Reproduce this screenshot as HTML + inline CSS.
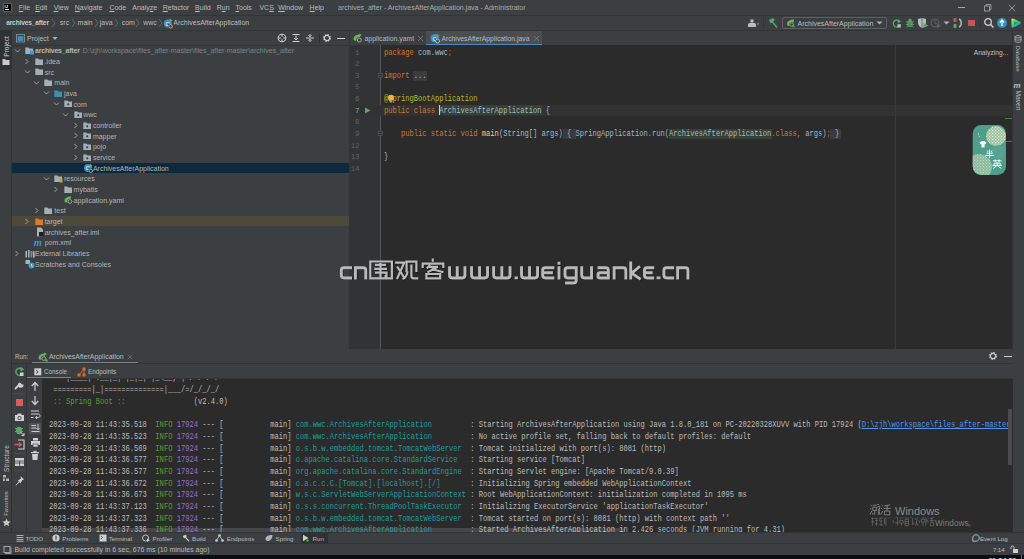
<!DOCTYPE html>
<html><head><meta charset="utf-8">
<style>
*{margin:0;padding:0;box-sizing:border-box}
html,body{width:1024px;height:559px;overflow:hidden;background:#3c3f41;font-family:"Liberation Sans",sans-serif;color:#bbbbbb;position:relative}
.a{position:absolute;display:block}
.t{position:absolute;white-space:pre;color:#bbbbbb}
.m{font-family:"Liberation Mono",monospace}
</style></head><body>
<div class="a" style="left:0px;top:15px;width:1024px;height:1px;background:#323435;"></div>
<div class="a" style="left:3px;top:3px;width:9px;height:9px;background:#1d6fb8;border-radius:1px"></div>
<div class="a" style="left:4px;top:4px;width:7px;height:7px;background:#000000;"></div>
<div class="t" style="left:4.6px;top:3.6px;font-size:4px;line-height:5px;color:#fff;font-weight:bold">IJ</div>
<div class="a" style="left:5px;top:9px;width:4px;height:1px;background:#ffffff;"></div>
<div class="t" style="left:18.80px;top:3.40px;font-size:7px;line-height:10px;color:#bbbbbb;"><u style="text-decoration-thickness:0.6px;text-underline-offset:1px">F</u>ile</div>
<div class="t" style="left:35.20px;top:3.40px;font-size:7px;line-height:10px;color:#bbbbbb;"><u style="text-decoration-thickness:0.6px;text-underline-offset:1px">E</u>dit</div>
<div class="t" style="left:53.70px;top:3.40px;font-size:7px;line-height:10px;color:#bbbbbb;"><u style="text-decoration-thickness:0.6px;text-underline-offset:1px">V</u>iew</div>
<div class="t" style="left:74.80px;top:3.40px;font-size:7px;line-height:10px;color:#bbbbbb;"><u style="text-decoration-thickness:0.6px;text-underline-offset:1px">N</u>avigate</div>
<div class="t" style="left:109.40px;top:3.40px;font-size:7px;line-height:10px;color:#bbbbbb;"><u style="text-decoration-thickness:0.6px;text-underline-offset:1px">C</u>ode</div>
<div class="t" style="left:132.30px;top:3.40px;font-size:7px;line-height:10px;color:#bbbbbb;">Analy<u style="text-decoration-thickness:0.6px;text-underline-offset:1px">z</u>e</div>
<div class="t" style="left:162.70px;top:3.40px;font-size:7px;line-height:10px;color:#bbbbbb;"><u style="text-decoration-thickness:0.6px;text-underline-offset:1px">R</u>efactor</div>
<div class="t" style="left:195.10px;top:3.40px;font-size:7px;line-height:10px;color:#bbbbbb;"><u style="text-decoration-thickness:0.6px;text-underline-offset:1px">B</u>uild</div>
<div class="t" style="left:216.70px;top:3.40px;font-size:7px;line-height:10px;color:#bbbbbb;">R<u style="text-decoration-thickness:0.6px;text-underline-offset:1px">u</u>n</div>
<div class="t" style="left:235.50px;top:3.40px;font-size:7px;line-height:10px;color:#bbbbbb;"><u style="text-decoration-thickness:0.6px;text-underline-offset:1px">T</u>ools</div>
<div class="t" style="left:259.40px;top:3.40px;font-size:7px;line-height:10px;color:#bbbbbb;">VC<u style="text-decoration-thickness:0.6px;text-underline-offset:1px">S</u></div>
<div class="t" style="left:278.20px;top:3.40px;font-size:7px;line-height:10px;color:#bbbbbb;"><u style="text-decoration-thickness:0.6px;text-underline-offset:1px">W</u>indow</div>
<div class="t" style="left:309.60px;top:3.40px;font-size:7px;line-height:10px;color:#bbbbbb;"><u style="text-decoration-thickness:0.6px;text-underline-offset:1px">H</u>elp</div>
<div class="t" style="left:338.00px;top:2.90px;font-size:7px;line-height:10px;color:#a9abad;">archives_after - ArchivesAfterApplication.java - Administrator</div>
<div class="a" style="left:958px;top:7px;width:7px;height:0.8px;background:#a8a8a8;"></div>
<svg class="a" style="left:984px;top:3.5px;" width="8" height="8" viewBox="0 0 8 8"><rect x="0.5" y="2" width="5" height="5" fill="none" stroke="#a8a8a8" stroke-width="0.8"/><path d="M2 2V0.5H7V5.5H5.5" fill="none" stroke="#a8a8a8" stroke-width="0.8"/></svg>
<svg class="a" style="left:1008px;top:4px;" width="8" height="8" viewBox="0 0 8 8"><path d="M0.8 0.8L7.2 7.2M7.2 0.8L0.8 7.2" stroke="#a8a8a8" stroke-width="0.8"/></svg>
<div class="a" style="left:0px;top:30px;width:1024px;height:1px;background:#323435;"></div>
<div class="t" style="left:6.20px;top:18.40px;font-size:6.6px;line-height:10px;color:#c8c8c8;font-weight:bold;letter-spacing:-0.15px">archives_after</div>
<div class="t" style="left:59.80px;top:18.40px;font-size:7px;line-height:10px;color:#bbbbbb;">src</div>
<div class="t" style="left:77.60px;top:18.40px;font-size:7px;line-height:10px;color:#bbbbbb;">main</div>
<div class="t" style="left:99.80px;top:18.40px;font-size:7px;line-height:10px;color:#bbbbbb;">java</div>
<div class="t" style="left:121.70px;top:18.40px;font-size:7px;line-height:10px;color:#bbbbbb;">com</div>
<div class="t" style="left:143.20px;top:18.40px;font-size:7px;line-height:10px;color:#bbbbbb;">wwc</div>
<div class="t" style="left:173.30px;top:18.40px;font-size:7px;line-height:10px;color:#bbbbbb;">ArchivesAfterApplication</div>
<svg class="a" style="left:51px;top:18px;" width="5" height="10" viewBox="0 0 5 10"><path d="M1 1L4 5L1 9" fill="none" stroke="#6e7072" stroke-width="0.8"/></svg>
<svg class="a" style="left:70.8px;top:18px;" width="5" height="10" viewBox="0 0 5 10"><path d="M1 1L4 5L1 9" fill="none" stroke="#6e7072" stroke-width="0.8"/></svg>
<svg class="a" style="left:93.7px;top:18px;" width="5" height="10" viewBox="0 0 5 10"><path d="M1 1L4 5L1 9" fill="none" stroke="#6e7072" stroke-width="0.8"/></svg>
<svg class="a" style="left:114px;top:18px;" width="5" height="10" viewBox="0 0 5 10"><path d="M1 1L4 5L1 9" fill="none" stroke="#6e7072" stroke-width="0.8"/></svg>
<svg class="a" style="left:135px;top:18px;" width="5" height="10" viewBox="0 0 5 10"><path d="M1 1L4 5L1 9" fill="none" stroke="#6e7072" stroke-width="0.8"/></svg>
<svg class="a" style="left:157.6px;top:18px;" width="5" height="10" viewBox="0 0 5 10"><path d="M1 1L4 5L1 9" fill="none" stroke="#6e7072" stroke-width="0.8"/></svg>
<svg class="a" style="left:163px;top:18px;" width="11" height="11" viewBox="0 0 11 11"><circle cx="4.8" cy="5.4" r="4" fill="#3d8fc6"/><text x="4.6" y="7.6" font-size="6" text-anchor="middle" fill="#fff" font-family="Liberation Sans">C</text><rect x="5" y="6" width="6" height="5" fill="#3c3f41"/><circle cx="7.5" cy="8.3" r="1.8" fill="none" stroke="#c8c8c8" stroke-width="0.8"/><path d="M6.5 0.3L9.5 2.5L6.5 4.7Z" fill="#59a869"/></svg>
<svg class="a" style="left:746px;top:18px;" width="14" height="10" viewBox="0 0 14 10"><path d="M2 9V6.5C2 5.5 3 5 4 5H8C9 5 10 5.5 10 6.5V9Z M4.5 4.5V1.5H7.5V4.5Z" fill="#bbbbbb"/><path d="M11 5.5L13 5.5L12 7Z" fill="#bbb"/></svg>
<div class="a" style="left:763px;top:17px;width:1px;height:12px;background:#323435;"></div>
<svg class="a" style="left:767px;top:17px;" width="12" height="12" viewBox="0 0 12 12"><path d="M2 3L6 1L8 3L6 4.5L10.5 10L9.5 11L5 5.5L3.5 6.5Z" fill="#59a869"/></svg>
<div class="a" style="left:782px;top:17px;width:105px;height:12px;border:1px solid #5e6060;border-radius:2px;background:#3c3f41"></div>
<svg class="a" style="left:786px;top:18px;" width="10" height="10" viewBox="0 0 10 10"><path d="M1 6C1 3 4 1.5 8 1.5C8 5 6 8 3 8C2 8 1 7 1 6Z" fill="#6db553"/><circle cx="5.5" cy="6.5" r="2.5" fill="#3c3f41"/><circle cx="5.5" cy="6.5" r="1.8" fill="none" stroke="#afb1b3" stroke-width="0.8"/><circle cx="7.5" cy="8.3" r="1.2" fill="#2fc424"/></svg>
<div class="t" style="left:797.50px;top:18.50px;font-size:7px;line-height:10px;color:#bbbbbb;">ArchivesAfterApplication</div>
<svg class="a" style="left:876px;top:20px;" width="7" height="6" viewBox="0 0 7 6"><path d="M0.5 1.5H6.5L3.5 4.5Z" fill="#afb1b3"/></svg>
<svg class="a" style="left:891px;top:17px;" width="12" height="12" viewBox="0 0 12 12"><path d="M8.8 4.8A3.5 3.5 0 1 0 9 8" fill="none" stroke="#59a869" stroke-width="1.3"/><path d="M6.8 2L10 4.6L6.8 6.4Z" fill="#59a869"/><rect x="6.5" y="7.2" width="3.3" height="3.3" fill="#bbbbbb"/></svg>
<svg class="a" style="left:904px;top:17px;" width="12" height="12" viewBox="0 0 12 12"><ellipse cx="6" cy="6.8" rx="2.6" ry="3.3" fill="#59a869"/><path d="M2 5H10M2 7.5H10M2.5 10L4 9M9.5 10L8 9" stroke="#59a869" stroke-width="0.9"/><circle cx="6" cy="3" r="1.6" fill="#59a869"/><path d="M4.5 6H7.5M4.5 8.3H7.5" stroke="#3c3f41" stroke-width="0.6"/></svg>
<svg class="a" style="left:917px;top:17px;" width="12" height="12" viewBox="0 0 12 12"><path d="M1 2L5 1L9 2V6C9 9 5 11 5 11C5 11 1 9 1 6Z" fill="#bbbbbb"/><path d="M5 1V11" stroke="#3c3f41" stroke-width="0.6"/><path d="M6.5 6L11.5 8.5L6.5 11Z" fill="#59a869"/></svg>
<svg class="a" style="left:930px;top:17px;" width="12" height="12" viewBox="0 0 12 12"><circle cx="5" cy="6" r="4" fill="none" stroke="#5d5f61" stroke-width="1"/><path d="M5 3V6L7 7" stroke="#5d5f61" stroke-width="0.9" fill="none"/><path d="M7 6.5L11 9L7 11.5Z" fill="#5d5f61"/></svg>
<svg class="a" style="left:943px;top:20px;" width="7" height="6" viewBox="0 0 7 6"><path d="M0.5 1.5H6.5L3.5 4.5Z" fill="#afb1b3"/></svg>
<svg class="a" style="left:952px;top:17px;" width="12" height="12" viewBox="0 0 12 12"><rect x="1.5" y="1" width="3" height="4" rx="1" fill="#c75450"/><rect x="1.5" y="7" width="3" height="4" rx="1" fill="#59a869"/><path d="M7 2C10 3 10 9 7 10" fill="none" stroke="#bbbbbb" stroke-width="1.4"/></svg>
<div class="a" style="left:968px;top:19.5px;width:6.5px;height:6.5px;background:#c75450;"></div>
<div class="a" style="left:980px;top:17px;width:1px;height:12px;background:#323435;"></div>
<svg class="a" style="left:983px;top:17px;" width="12" height="12" viewBox="0 0 12 12"><circle cx="5" cy="5" r="3.3" fill="none" stroke="#cfcfcf" stroke-width="1.3"/><path d="M7.5 7.5L10.5 10.5" stroke="#cfcfcf" stroke-width="1.5"/></svg>
<svg class="a" style="left:996px;top:17px;" width="12" height="12" viewBox="0 0 12 12"><circle cx="6" cy="6" r="5" fill="#3592c4"/><path d="M6 9V3.5M3.8 5.5L6 3L8.2 5.5" fill="none" stroke="#fff" stroke-width="1.2"/></svg>
<svg class="a" style="left:1010px;top:17px;" width="12" height="12" viewBox="0 0 12 12"><defs><linearGradient id="tbx" x1="0" y1="0" x2="1" y2="1"><stop offset="0" stop-color="#f0e53a"/><stop offset="0.45" stop-color="#2fd08a"/><stop offset="1" stop-color="#1f7ae0"/></linearGradient></defs><path d="M1.5 2.5Q1.5 1 3 1.5L10.5 5Q11.5 6 10.5 7L3 10.5Q1.5 11 1.5 9.5Z" fill="url(#tbx)"/><path d="M4 4V8L7.5 6Z" fill="#1c1c1c" opacity="0.35"/></svg>
<div class="a" style="left:0px;top:31px;width:11px;height:512px;background:#3c3f41;"></div>
<div class="a" style="left:0px;top:31px;width:11px;height:39px;background:#2f3133;"></div>
<div class="a" style="left:11px;top:31px;width:1px;height:501px;background:#2f3132;"></div>
<div class="t" style="left:-9px;top:42px;width:30px;height:9px;font-size:6.6px;line-height:9px;transform:rotate(-90deg);text-align:center;color:#d0d0d0">Project</div>
<svg class="a" style="left:2px;top:58px;" width="8" height="8" viewBox="0 0 8 8"><path d="M0.5 1H3L4 2H7.5V7H0.5Z" fill="#c9c9c9"/></svg>
<div class="t" style="left:-13px;top:453.5px;width:38px;height:9px;font-size:6.6px;line-height:9px;transform:rotate(-90deg);text-align:center;color:#bbbbbb">Structure</div>
<svg class="a" style="left:2px;top:474px;" width="8" height="8" viewBox="0 0 8 8"><rect x="1" y="1" width="3" height="2.5" fill="#afb1b3"/><rect x="4" y="4.5" width="3" height="2.5" fill="#afb1b3"/><rect x="1" y="4.5" width="2" height="2.5" fill="#afb1b3"/></svg>
<div class="t" style="left:-13px;top:498.5px;width:38px;height:9px;font-size:6px;line-height:9px;transform:rotate(-90deg);text-align:center;color:#bbbbbb">Favorites</div>
<svg class="a" style="left:1.5px;top:518px;" width="9" height="9" viewBox="0 0 9 9"><path d="M4.5 0.5L5.7 3.3L8.6 3.5L6.4 5.4L7.1 8.3L4.5 6.8L1.9 8.3L2.6 5.4L0.4 3.5L3.3 3.3Z" fill="#c9c9c9"/></svg>
<div class="a" style="left:12px;top:45px;width:337px;height:1px;background:#323435;"></div>
<svg class="a" style="left:16px;top:34px;" width="9" height="9" viewBox="0 0 9 9"><rect x="0.5" y="0.5" width="8" height="7.5" fill="none" stroke="#8b8d8f" stroke-width="0.9"/><rect x="1.6" y="2.2" width="5.8" height="4.7" fill="#3592c4"/></svg>
<div class="t" style="left:27.00px;top:33.80px;font-size:7px;line-height:10px;color:#bbbbbb;">Project</div>
<svg class="a" style="left:52px;top:36px;" width="6" height="5" viewBox="0 0 6 5"><path d="M0.5 1H5.5L3 4Z" fill="#afb1b3"/></svg>
<svg class="a" style="left:277px;top:33px;" width="10" height="10" viewBox="0 0 10 10"><circle cx="5" cy="5" r="3.8" fill="none" stroke="#cfcfcf" stroke-width="1.1"/><path d="M5 1.5V8.5M1.5 5H8.5" stroke="#cfcfcf" stroke-width="1"/><circle cx="5" cy="5" r="1.3" fill="#3c3f41"/></svg>
<svg class="a" style="left:291px;top:33px;" width="10" height="10" viewBox="0 0 10 10"><path d="M1.5 1.5H8.5M1.5 8.5H8.5M5 2.5V7M3 5L5 7L7 5" fill="none" stroke="#cfcfcf" stroke-width="1"/></svg>
<svg class="a" style="left:305px;top:33px;" width="10" height="10" viewBox="0 0 10 10"><path d="M1 5H9M5 1V3.5M3.5 2.3L5 3.8L6.5 2.3M5 9V6.5M3.5 7.7L5 6.2L6.5 7.7" fill="none" stroke="#cfcfcf" stroke-width="1"/></svg>
<div class="a" style="left:319px;top:34px;width:1px;height:9px;background:#2f3132;"></div>
<svg class="a" style="left:322px;top:33px;" width="10" height="10" viewBox="0 0 10 10"><circle cx="5" cy="5" r="3" fill="none" stroke="#cfcfcf" stroke-width="1.8" stroke-dasharray="1.5 0.85"/><circle cx="5" cy="5" r="2.6" fill="none" stroke="#cfcfcf" stroke-width="1"/></svg>
<div class="a" style="left:337px;top:38px;width:8px;height:1px;background:#cfcfcf;"></div>
<div class="a" style="left:12px;top:163px;width:337px;height:10px;background:#0d293e;"></div>
<div class="a" style="left:12px;top:216px;width:337px;height:10px;background:#4d4a3b;"></div>
<svg class="a" style="left:13.899999999999999px;top:47.5px;" width="7" height="6" viewBox="0 0 7 6"><path d="M1 1.5L3.5 4L6 1.5" fill="none" stroke="#b0b0b0" stroke-width="0.9"/></svg>
<svg class="a" style="left:25.0px;top:46.0px;" width="10" height="9" viewBox="0 0 10 9"><path d="M0.3 1.5H3.3L4.3 2.5H8V8H0.3Z" fill="#a3afb7"/><rect x="5" y="4.5" width="4" height="4" fill="#389fd6"/></svg>
<div class="t" style="left:35.00px;top:46.30px;font-size:7px;line-height:10px;color:#b4b4b4;font-weight:bold;letter-spacing:-0.2px">archives_after</div>
<div class="t" style="left:82.80px;top:46.00px;font-size:7px;line-height:10px;color:#808284;">D:\zjh\workspace\files_after-master\files_after-master\archives_after</div>
<svg class="a" style="left:24.099999999999998px;top:57.67px;" width="6" height="7" viewBox="0 0 6 7"><path d="M1.5 1L4 3.5L1.5 6" fill="none" stroke="#b0b0b0" stroke-width="0.9"/></svg>
<svg class="a" style="left:34.7px;top:56.67px;" width="10" height="9" viewBox="0 0 10 9"><path d="M0.3 1.5H3.3L4.3 2.5H8V8H0.3Z" fill="#a3afb7"/></svg>
<div class="t" style="left:44.65px;top:56.97px;font-size:7px;line-height:10px;color:#b4b4b4;">.idea</div>
<svg class="a" style="left:23.599999999999998px;top:68.84px;" width="7" height="6" viewBox="0 0 7 6"><path d="M1 1.5L3.5 4L6 1.5" fill="none" stroke="#b0b0b0" stroke-width="0.9"/></svg>
<svg class="a" style="left:34.7px;top:67.34px;" width="10" height="9" viewBox="0 0 10 9"><path d="M0.3 1.5H3.3L4.3 2.5H8V8H0.3Z" fill="#a3afb7"/></svg>
<div class="t" style="left:44.65px;top:67.64px;font-size:7px;line-height:10px;color:#b4b4b4;">src</div>
<svg class="a" style="left:33.3px;top:79.50999999999999px;" width="7" height="6" viewBox="0 0 7 6"><path d="M1 1.5L3.5 4L6 1.5" fill="none" stroke="#b0b0b0" stroke-width="0.9"/></svg>
<svg class="a" style="left:44.4px;top:78.00999999999999px;" width="10" height="9" viewBox="0 0 10 9"><path d="M0.3 1.5H3.3L4.3 2.5H8V8H0.3Z" fill="#a3afb7"/></svg>
<div class="t" style="left:54.30px;top:78.31px;font-size:7px;line-height:10px;color:#b4b4b4;">main</div>
<svg class="a" style="left:43.0px;top:90.18px;" width="7" height="6" viewBox="0 0 7 6"><path d="M1 1.5L3.5 4L6 1.5" fill="none" stroke="#b0b0b0" stroke-width="0.9"/></svg>
<svg class="a" style="left:54.099999999999994px;top:88.68px;" width="10" height="9" viewBox="0 0 10 9"><path d="M0.3 1.5H3.3L4.3 2.5H8V8H0.3Z" fill="#3d8fb0"/></svg>
<div class="t" style="left:63.95px;top:88.98px;font-size:7px;line-height:10px;color:#b4b4b4;">java</div>
<svg class="a" style="left:52.699999999999996px;top:100.85px;" width="7" height="6" viewBox="0 0 7 6"><path d="M1 1.5L3.5 4L6 1.5" fill="none" stroke="#b0b0b0" stroke-width="0.9"/></svg>
<svg class="a" style="left:63.8px;top:99.35px;" width="10" height="9" viewBox="0 0 10 9"><path d="M0.3 1.5H3.3L4.3 2.5H8V8H0.3Z" fill="#a3afb7"/><circle cx="4.2" cy="5.3" r="1.1" fill="#3c3f41"/></svg>
<div class="t" style="left:73.60px;top:99.65px;font-size:7px;line-height:10px;color:#b4b4b4;">com</div>
<svg class="a" style="left:62.400000000000006px;top:111.52px;" width="7" height="6" viewBox="0 0 7 6"><path d="M1 1.5L3.5 4L6 1.5" fill="none" stroke="#b0b0b0" stroke-width="0.9"/></svg>
<svg class="a" style="left:73.5px;top:110.02px;" width="10" height="9" viewBox="0 0 10 9"><path d="M0.3 1.5H3.3L4.3 2.5H8V8H0.3Z" fill="#a3afb7"/><circle cx="4.2" cy="5.3" r="1.1" fill="#3c3f41"/></svg>
<div class="t" style="left:83.25px;top:110.32px;font-size:7px;line-height:10px;color:#b4b4b4;">wwc</div>
<svg class="a" style="left:72.6px;top:121.69px;" width="6" height="7" viewBox="0 0 6 7"><path d="M1.5 1L4 3.5L1.5 6" fill="none" stroke="#b0b0b0" stroke-width="0.9"/></svg>
<svg class="a" style="left:83.19999999999999px;top:120.69px;" width="10" height="9" viewBox="0 0 10 9"><path d="M0.3 1.5H3.3L4.3 2.5H8V8H0.3Z" fill="#a3afb7"/><circle cx="4.2" cy="5.3" r="1.1" fill="#3c3f41"/></svg>
<div class="t" style="left:92.90px;top:120.99px;font-size:7px;line-height:10px;color:#b4b4b4;">controller</div>
<svg class="a" style="left:72.6px;top:132.36px;" width="6" height="7" viewBox="0 0 6 7"><path d="M1.5 1L4 3.5L1.5 6" fill="none" stroke="#b0b0b0" stroke-width="0.9"/></svg>
<svg class="a" style="left:83.19999999999999px;top:131.36px;" width="10" height="9" viewBox="0 0 10 9"><path d="M0.3 1.5H3.3L4.3 2.5H8V8H0.3Z" fill="#a3afb7"/><circle cx="4.2" cy="5.3" r="1.1" fill="#3c3f41"/></svg>
<div class="t" style="left:92.90px;top:131.66px;font-size:7px;line-height:10px;color:#b4b4b4;">mapper</div>
<svg class="a" style="left:72.6px;top:143.03px;" width="6" height="7" viewBox="0 0 6 7"><path d="M1.5 1L4 3.5L1.5 6" fill="none" stroke="#b0b0b0" stroke-width="0.9"/></svg>
<svg class="a" style="left:83.19999999999999px;top:142.03px;" width="10" height="9" viewBox="0 0 10 9"><path d="M0.3 1.5H3.3L4.3 2.5H8V8H0.3Z" fill="#a3afb7"/><circle cx="4.2" cy="5.3" r="1.1" fill="#3c3f41"/></svg>
<div class="t" style="left:92.90px;top:142.33px;font-size:7px;line-height:10px;color:#b4b4b4;">pojo</div>
<svg class="a" style="left:72.6px;top:153.7px;" width="6" height="7" viewBox="0 0 6 7"><path d="M1.5 1L4 3.5L1.5 6" fill="none" stroke="#b0b0b0" stroke-width="0.9"/></svg>
<svg class="a" style="left:83.19999999999999px;top:152.7px;" width="10" height="9" viewBox="0 0 10 9"><path d="M0.3 1.5H3.3L4.3 2.5H8V8H0.3Z" fill="#a3afb7"/><circle cx="4.2" cy="5.3" r="1.1" fill="#3c3f41"/></svg>
<div class="t" style="left:92.90px;top:153.00px;font-size:7px;line-height:10px;color:#b4b4b4;">service</div>
<svg class="a" style="left:83.19999999999999px;top:163.37px;" width="10" height="10" viewBox="0 0 10 10"><circle cx="5" cy="5" r="4" fill="#3d8fc6"/><text x="5" y="7.2" font-size="6" text-anchor="middle" fill="#fff" font-family="Liberation Sans">C</text><rect x="5.5" y="5.5" width="5" height="5" fill="#0d293e"/><circle cx="7.8" cy="7.8" r="1.7" fill="none" stroke="#c8c8c8" stroke-width="0.8"/><path d="M7 0.5L9.5 2.5L7 4.5Z" fill="#59a869"/></svg>
<div class="t" style="left:92.90px;top:163.67px;font-size:7px;line-height:10px;color:#b4b4b4;">ArchivesAfterApplication</div>
<svg class="a" style="left:43.0px;top:175.54px;" width="7" height="6" viewBox="0 0 7 6"><path d="M1 1.5L3.5 4L6 1.5" fill="none" stroke="#b0b0b0" stroke-width="0.9"/></svg>
<svg class="a" style="left:54.099999999999994px;top:174.04px;" width="10" height="9" viewBox="0 0 10 9"><path d="M0.3 1.5H3.3L4.3 2.5H8V8H0.3Z" fill="#a3afb7"/><rect x="5.5" y="4.5" width="3" height="4" fill="#c9a240"/></svg>
<div class="t" style="left:63.95px;top:174.34px;font-size:7px;line-height:10px;color:#b4b4b4;">resources</div>
<svg class="a" style="left:53.199999999999996px;top:185.71px;" width="6" height="7" viewBox="0 0 6 7"><path d="M1.5 1L4 3.5L1.5 6" fill="none" stroke="#b0b0b0" stroke-width="0.9"/></svg>
<svg class="a" style="left:63.8px;top:184.71px;" width="10" height="9" viewBox="0 0 10 9"><path d="M0.3 1.5H3.3L4.3 2.5H8V8H0.3Z" fill="#a3afb7"/></svg>
<div class="t" style="left:73.60px;top:185.01px;font-size:7px;line-height:10px;color:#b4b4b4;">mybatis</div>
<svg class="a" style="left:63.8px;top:195.38px;" width="10" height="10" viewBox="0 0 10 10"><path d="M0.5 6C0.5 3 3 1.5 7 1.5C7 5 5 7.5 2.5 7.5C1.5 7.5 0.5 7 0.5 6Z" fill="#6db553"/><circle cx="6" cy="6.5" r="2.8" fill="#3c3f41"/><circle cx="6" cy="6.5" r="1.9" fill="none" stroke="#afb1b3" stroke-width="0.8"/></svg>
<div class="t" style="left:73.60px;top:195.68px;font-size:7px;line-height:10px;color:#b4b4b4;">application.yaml</div>
<svg class="a" style="left:33.8px;top:207.05px;" width="6" height="7" viewBox="0 0 6 7"><path d="M1.5 1L4 3.5L1.5 6" fill="none" stroke="#b0b0b0" stroke-width="0.9"/></svg>
<svg class="a" style="left:44.4px;top:206.05px;" width="10" height="9" viewBox="0 0 10 9"><path d="M0.3 1.5H3.3L4.3 2.5H8V8H0.3Z" fill="#a3afb7"/></svg>
<div class="t" style="left:54.30px;top:206.35px;font-size:7px;line-height:10px;color:#b4b4b4;">test</div>
<svg class="a" style="left:24.099999999999998px;top:217.72px;" width="6" height="7" viewBox="0 0 6 7"><path d="M1.5 1L4 3.5L1.5 6" fill="none" stroke="#b0b0b0" stroke-width="0.9"/></svg>
<svg class="a" style="left:34.7px;top:216.72px;" width="10" height="9" viewBox="0 0 10 9"><path d="M0.3 1.5H3.3L4.3 2.5H8V8H0.3Z" fill="#d97b2c"/></svg>
<div class="t" style="left:44.65px;top:217.02px;font-size:7px;line-height:10px;color:#b4b4b4;">target</div>
<svg class="a" style="left:34.7px;top:227.39px;" width="10" height="10" viewBox="0 0 10 10"><path d="M2 0.5H6L8 2.5V9.5H2Z" fill="#afb1b3"/><rect x="4" y="5" width="4.5" height="4.5" fill="#1e1e1e"/></svg>
<div class="t" style="left:44.65px;top:227.69px;font-size:7px;line-height:10px;color:#b4b4b4;">archives_after.iml</div>
<div class="t" style="left:33.70px;top:238.06px;font-size:9px;line-height:10px;color:#3d9ccf;font-style:italic;font-weight:bold">m</div>
<div class="t" style="left:44.65px;top:238.36px;font-size:7px;line-height:10px;color:#b4b4b4;">pom.xml</div>
<svg class="a" style="left:14.399999999999999px;top:249.73px;" width="6" height="7" viewBox="0 0 6 7"><path d="M1.5 1L4 3.5L1.5 6" fill="none" stroke="#b0b0b0" stroke-width="0.9"/></svg>
<svg class="a" style="left:25.0px;top:248.73px;" width="10" height="10" viewBox="0 0 10 10"><rect x="0.5" y="2" width="1.5" height="6.5" fill="#afb1b3"/><rect x="3" y="1" width="1.5" height="7.5" fill="#afb1b3"/><rect x="5.5" y="2" width="1.5" height="6.5" fill="#389fd6"/><path d="M7.5 2.5L9.5 2L9.8 8.5L8 8.7Z" fill="#afb1b3"/></svg>
<div class="t" style="left:35.00px;top:249.03px;font-size:7px;line-height:10px;color:#b4b4b4;">External Libraries</div>
<svg class="a" style="left:25.0px;top:259.4px;" width="10" height="10" viewBox="0 0 10 10"><path d="M0.5 1H5V5H0.5Z" fill="#afb1b3"/><circle cx="6.5" cy="6.5" r="3" fill="#389fd6"/><path d="M6.5 5V6.8L7.8 7.5" stroke="#fff" stroke-width="0.7" fill="none"/></svg>
<div class="t" style="left:35.00px;top:259.70px;font-size:7px;line-height:10px;color:#b4b4b4;">Scratches and Consoles</div>
<div class="a" style="left:349px;top:31px;width:1px;height:318px;background:#323435;"></div>
<div class="a" style="left:350px;top:31px;width:663px;height:14px;background:#3c3f41;"></div>
<div class="a" style="left:426px;top:31px;width:116px;height:13px;background:#4a4e50;"></div>
<div class="a" style="left:426px;top:43.5px;width:116px;height:2px;background:#4a88c7;"></div>
<svg class="a" style="left:353px;top:33px;" width="11" height="11" viewBox="0 0 11 11"><path d="M0.5 6C0.5 3 3 1.5 7.5 1.2C7.5 5 5.5 7.8 2.5 7.8C1.5 7.8 0.5 7 0.5 6Z" fill="#6db553"/><path d="M6 0.5L9 2L6.5 3Z" fill="#6db553"/><circle cx="6.3" cy="7" r="3" fill="#3c3f41"/><circle cx="6.3" cy="7" r="2" fill="none" stroke="#afb1b3" stroke-width="0.9"/></svg>
<div class="t" style="left:364.50px;top:33.80px;font-size:6.9px;line-height:10px;color:#bbbbbb;">application.yaml</div>
<svg class="a" style="left:416.5px;top:35px;" width="7" height="7" viewBox="0 0 7 7"><path d="M1 1L6 6M6 1L1 6" stroke="#7e8082" stroke-width="0.8"/></svg>
<svg class="a" style="left:430px;top:33px;" width="11" height="11" viewBox="0 0 11 11"><circle cx="4.8" cy="5.2" r="4.2" fill="#3d8fc6"/><text x="4.6" y="7.5" font-size="6" text-anchor="middle" fill="#fff" font-family="Liberation Sans">C</text><rect x="5" y="5.5" width="6" height="6" fill="#4a4e50"/><circle cx="7.5" cy="8" r="2" fill="none" stroke="#c8c8c8" stroke-width="0.9"/><path d="M6.5 0.5L9.5 2.8L6.5 5Z" fill="#59a869"/></svg>
<div class="t" style="left:441.40px;top:33.80px;font-size:6.8px;line-height:10px;color:#bbbbbb;">ArchivesAfterApplication.java</div>
<svg class="a" style="left:533px;top:35px;" width="7" height="7" viewBox="0 0 7 7"><path d="M1 1L6 6M6 1L1 6" stroke="#7e8082" stroke-width="0.8"/></svg>
<div class="a" style="left:350px;top:45px;width:30px;height:304px;background:#313335;"></div>
<div class="a" style="left:380px;top:45px;width:633px;height:304px;background:#2b2b2b;"></div>
<div class="a" style="left:380px;top:45px;width:1px;height:304px;background:#555555;"></div>
<div class="a" style="left:350px;top:104.5px;width:663px;height:11px;background:#323232;"></div>
<div class="a" style="left:895px;top:45px;width:1px;height:304px;background:#3a3a3a;"></div>
<div class="t m" style="left:337.5px;width:22px;text-align:right;top:47.50px;font-size:7.4px;line-height:10px;color:#606366">1</div>
<div class="t m" style="left:337.5px;width:22px;text-align:right;top:59.13px;font-size:7.4px;line-height:10px;color:#606366">2</div>
<div class="t m" style="left:337.5px;width:22px;text-align:right;top:70.76px;font-size:7.4px;line-height:10px;color:#606366">3</div>
<div class="t m" style="left:337.5px;width:22px;text-align:right;top:82.39px;font-size:7.4px;line-height:10px;color:#606366">5</div>
<div class="t m" style="left:337.5px;width:22px;text-align:right;top:94.02px;font-size:7.4px;line-height:10px;color:#606366">6</div>
<div class="t m" style="left:337.5px;width:22px;text-align:right;top:105.65px;font-size:7.4px;line-height:10px;color:#a4a3a3">7</div>
<div class="t m" style="left:337.5px;width:22px;text-align:right;top:117.28px;font-size:7.4px;line-height:10px;color:#606366">8</div>
<div class="t m" style="left:337.5px;width:22px;text-align:right;top:128.91px;font-size:7.4px;line-height:10px;color:#606366">9</div>
<div class="t m" style="left:337.5px;width:22px;text-align:right;top:140.54px;font-size:7.4px;line-height:10px;color:#606366">12</div>
<div class="t m" style="left:337.5px;width:22px;text-align:right;top:152.17px;font-size:7.4px;line-height:10px;color:#606366">13</div>
<div class="t m" style="left:337.5px;width:22px;text-align:right;top:163.80px;font-size:7.4px;line-height:10px;color:#606366">14</div>
<svg class="a" style="left:364px;top:106.5px;" width="7" height="7" viewBox="0 0 7 7"><path d="M1 0.5L6.5 3.5L1 6.5Z" fill="#59a869"/></svg>
<svg class="a" style="left:378px;top:72.5px;" width="5" height="5" viewBox="0 0 5 5"><rect x="0.4" y="0.4" width="4.2" height="4.2" fill="#2b2b2b" stroke="#5a5a5a" stroke-width="0.7"/><path d="M1.3 2.5H3.7" stroke="#7a7a7a" stroke-width="0.6"/></svg>
<svg class="a" style="left:378px;top:131px;" width="5" height="5" viewBox="0 0 5 5"><rect x="0.4" y="0.4" width="4.2" height="4.2" fill="#2b2b2b" stroke="#5a5a5a" stroke-width="0.7"/><path d="M1.3 2.5H3.7" stroke="#7a7a7a" stroke-width="0.6"/></svg>
<div class="a" style="left:413.32px;top:70.5px;width:13.78px;height:10px;background:#3b3b3b;"></div>
<div class="a" style="left:562.92px;top:128.5px;width:12.78px;height:10px;background:#3b3b3b;"></div>
<div class="a" style="left:830.3px;top:128.5px;width:10.649999999999999px;height:10px;background:#3b3b3b;"></div>
<div class="a" style="left:439.38px;top:105px;width:102.24px;height:10px;background:#344134;"></div>
<div class="a" style="left:669.42px;top:128.5px;width:102.24px;height:10px;background:#344134;"></div>
<div class="t m" style="left:383.50px;top:47.70px;font-size:8.2px;line-height:10px;color:#a9b7c6;transform:scaleX(0.8659);transform-origin:0 50%;"><span style="color:#cc7832;">package </span><span style="color:#a9b7c6;">com.wwc</span><span style="color:#cc7832;">;</span></div>
<div class="t m" style="left:383.50px;top:70.96px;font-size:8.2px;line-height:10px;color:#a9b7c6;transform:scaleX(0.8659);transform-origin:0 50%;"><span style="color:#cc7832;">import </span><span style="color:#a9b7c6;">...</span></div>
<div class="t m" style="left:383.50px;top:94.22px;font-size:8.2px;line-height:10px;color:#a9b7c6;transform:scaleX(0.8659);transform-origin:0 50%;"><span style="color:#bbb529;">@SpringBootApplication</span></div>
<div class="t m" style="left:383.50px;top:105.85px;font-size:8.2px;line-height:10px;color:#a9b7c6;transform:scaleX(0.8659);transform-origin:0 50%;"><span style="color:#cc7832;">public class </span><span style="color:#a9b7c6;">ArchivesAfterApplication </span><span style="color:#a9b7c6;">{</span></div>
<div class="t m" style="left:383.50px;top:129.11px;font-size:8.2px;line-height:10px;color:#a9b7c6;transform:scaleX(0.8659);transform-origin:0 50%;"><span style="color:#cc7832;">    public static void </span><span style="color:#ffc66d;">main</span><span style="color:#a9b7c6;">(String[] args) { SpringApplication.</span><span style="color:#a9b7c6;">run</span><span style="color:#a9b7c6;">(ArchivesAfterApplication</span><span style="color:#cc7832;">.class</span><span style="color:#cc7832;">, </span><span style="color:#a9b7c6;">args)</span><span style="color:#cc7832;">;</span><span style="color:#a9b7c6;"> }</span></div>
<div class="t m" style="left:383.50px;top:152.37px;font-size:8.2px;line-height:10px;color:#a9b7c6;transform:scaleX(0.8659);transform-origin:0 50%;"><span style="color:#a9b7c6;">}</span></div>
<div class="a" style="left:439px;top:105px;width:1px;height:10px;background:#d0d0d0;"></div>
<svg class="a" style="left:387px;top:94px;" width="8" height="9" viewBox="0 0 8 9"><circle cx="4" cy="3.8" r="3" fill="#f2b338"/><rect x="2.7" y="6.5" width="2.6" height="2" fill="#9d9d9d"/></svg>
<div class="t" style="left:973.70px;top:48.10px;font-size:6.7px;line-height:10px;color:#c0c0c0;">Analyzing...</div>
<div class="a" style="left:1004.5px;top:117.5px;width:7.5px;height:1.2px;background:#2e8b2e;"></div>
<div class="a" style="left:1004.5px;top:140.5px;width:7.5px;height:1.2px;background:#2e8b2e;"></div>
<div class="a" style="left:1013px;top:31px;width:11px;height:512px;background:#3c3f41;"></div>
<div class="a" style="left:1012px;top:31px;width:1px;height:501px;background:#2f3132;"></div>
<svg class="a" style="left:1014px;top:35px;" width="8" height="8" viewBox="0 0 8 8"><ellipse cx="4" cy="1.8" rx="3" ry="1.2" fill="none" stroke="#bbb" stroke-width="0.8"/><path d="M1 1.8V6.2C1 7.8 7 7.8 7 6.2V1.8" fill="none" stroke="#bbb" stroke-width="0.8"/><path d="M1 4C1 5.5 7 5.5 7 4" fill="none" stroke="#bbb" stroke-width="0.7"/></svg>
<div class="t" style="left:1005px;top:53.5px;width:26px;height:9px;font-size:6.1px;line-height:9px;transform:rotate(90deg);text-align:center;color:#bbbbbb">Database</div>
<div class="t" style="left:1013.50px;top:81.00px;font-size:8px;line-height:10px;color:#bbbbbb;font-style:italic;font-weight:bold">m</div>
<div class="t" style="left:1005px;top:96px;width:26px;height:9px;font-size:6.6px;line-height:9px;transform:rotate(90deg);text-align:center;color:#bbbbbb">Maven</div>
<div class="a" style="left:12px;top:349px;width:1001px;height:1px;background:#323435;"></div>
<div class="a" style="left:12px;top:349px;width:1001px;height:14px;background:#3c3f41;"></div>
<div class="t" style="left:14.90px;top:351.80px;font-size:6.3px;line-height:10px;color:#bbbbbb;">Run:</div>
<svg class="a" style="left:38px;top:352px;" width="11" height="10" viewBox="0 0 11 10"><path d="M0.5 6C0.5 3 3 1.5 7.5 1.2C7.5 5 5.5 7.8 2.5 7.8C1.5 7.8 0.5 7 0.5 6Z" fill="#6db553"/><path d="M6 0.5L9 2L6.5 3Z" fill="#6db553"/><circle cx="5.8" cy="6.5" r="2.9" fill="#3c3f41"/><circle cx="5.8" cy="6.5" r="1.9" fill="none" stroke="#afb1b3" stroke-width="0.9"/><circle cx="8.5" cy="8.5" r="1.3" fill="#2fc424"/></svg>
<div class="t" style="left:48.90px;top:351.80px;font-size:6.9px;line-height:10px;color:#bbbbbb;">ArchivesAfterApplication</div>
<svg class="a" style="left:127px;top:353.5px;" width="6" height="6" viewBox="0 0 6 6"><path d="M0.8 0.8L5.2 5.2M5.2 0.8L0.8 5.2" stroke="#6e7072" stroke-width="0.8"/></svg>
<div class="a" style="left:32px;top:362px;width:106px;height:2px;background:#808284;"></div>
<svg class="a" style="left:988px;top:351px;" width="10" height="10" viewBox="0 0 10 10"><circle cx="5" cy="5" r="3" fill="none" stroke="#cfcfcf" stroke-width="1.8" stroke-dasharray="1.5 0.85"/><circle cx="5" cy="5" r="2.6" fill="none" stroke="#cfcfcf" stroke-width="1"/></svg>
<div class="a" style="left:1004px;top:356px;width:8px;height:1px;background:#cfcfcf;"></div>
<div class="a" style="left:12px;top:363px;width:1001px;height:1px;background:#323435;"></div>
<div class="a" style="left:12px;top:364px;width:14px;height:168px;background:#3c3f41;"></div>
<div class="a" style="left:26px;top:364px;width:1px;height:168px;background:#323435;"></div>
<div class="a" style="left:27px;top:364px;width:986px;height:14px;background:#3c3f41;"></div>
<div class="a" style="left:27px;top:377px;width:44px;height:1.5px;background:#808284;"></div>
<div class="a" style="left:27px;top:378px;width:986px;height:1px;background:#323435;"></div>
<svg class="a" style="left:34px;top:368px;" width="8" height="8" viewBox="0 0 8 8"><rect x="0.3" y="0.3" width="7" height="7" fill="#cfcfcf"/><path d="M2 2L4.2 3.8L2 5.6" fill="none" stroke="#3c3f41" stroke-width="0.9"/></svg>
<div class="t" style="left:44.00px;top:367.10px;font-size:6.3px;line-height:10px;color:#bbbbbb;">Console</div>
<svg class="a" style="left:77px;top:367px;" width="9" height="10" viewBox="0 0 9 10"><rect x="5.5" y="0.5" width="3" height="3" fill="#e06c2b"/><rect x="0.5" y="6.5" width="3" height="3" fill="#e06c2b"/><rect x="5.5" y="6.5" width="3" height="3" fill="#e06c2b"/><path d="M7 2L2 8M7 2V8" stroke="#e06c2b" stroke-width="0.9"/></svg>
<div class="t" style="left:87.90px;top:367.10px;font-size:6.4px;line-height:10px;color:#bbbbbb;">Endpoints</div>
<div class="a" style="left:27px;top:379px;width:15px;height:153px;background:#3c3f41;"></div>
<div class="a" style="left:42px;top:379px;width:971px;height:153px;background:#2b2b2b;"></div>
<svg class="a" style="left:14px;top:366px;" width="11" height="11" viewBox="0 0 11 11"><path d="M8.5 3.8A3.6 3.6 0 1 0 8.8 7.2" fill="none" stroke="#59a869" stroke-width="1.5"/><path d="M6.5 0.8L10.3 3.5L6.5 5.5Z" fill="#59a869"/><rect x="6" y="6.5" width="3.5" height="3.5" fill="#cfcfcf"/></svg>
<svg class="a" style="left:14px;top:380px;" width="11" height="10" viewBox="0 0 11 10"><path d="M1.5 8.5L6 4" stroke="#cfcfcf" stroke-width="1.8" stroke-linecap="round"/><path d="M5.5 2.5A2.8 2.8 0 1 0 9.5 4.5L8 4.5L6.5 3Z" fill="#cfcfcf"/></svg>
<div class="a" style="left:14px;top:393px;width:11px;height:1px;background:#4a4d4f;"></div>
<div class="a" style="left:15.5px;top:399px;width:7px;height:7px;background:#db5c5c;"></div>
<svg class="a" style="left:14px;top:412px;" width="11" height="10" viewBox="0 0 11 10"><path d="M1 3H3L4 1.5H7L8 3H10V9H1Z" fill="#cfcfcf"/><circle cx="5.5" cy="6" r="2" fill="#3c3f41"/><circle cx="5.5" cy="6" r="1.2" fill="#cfcfcf"/></svg>
<svg class="a" style="left:14px;top:425px;" width="11" height="11" viewBox="0 0 11 11"><ellipse cx="5" cy="5.5" rx="3" ry="3.7" fill="#59a869"/><path d="M1 3.5H9M1 6.5H9" stroke="#59a869" stroke-width="1"/><path d="M6.5 7L10 10.5M10 8V10.5H7.5" stroke="#cfcfcf" stroke-width="1" fill="none"/></svg>
<svg class="a" style="left:14px;top:439px;" width="11" height="11" viewBox="0 0 11 11"><path d="M4 1H10V10H4" fill="none" stroke="#cfcfcf" stroke-width="1.1"/><path d="M0.5 5.5H7M5 3.5L7.2 5.5L5 7.5" fill="none" stroke="#db5c5c" stroke-width="1.3"/></svg>
<div class="a" style="left:14px;top:452.5px;width:11px;height:1px;background:#4a4d4f;"></div>
<svg class="a" style="left:14px;top:457px;" width="11" height="10" viewBox="0 0 11 10"><rect x="1" y="1" width="9" height="8" fill="#cfcfcf"/><path d="M1 4H10M1 6H10" stroke="#3c3f41" stroke-width="0.8"/><path d="M5.5 4V9" stroke="#3c3f41" stroke-width="0.8"/></svg>
<div class="a" style="left:14px;top:470px;width:11px;height:1px;background:#4a4d4f;"></div>
<svg class="a" style="left:14px;top:475px;" width="11" height="11" viewBox="0 0 11 11"><path d="M6.5 1L10 4.5L8.5 5L6 8.5L5.5 7L2 10.5L1.5 10L5 6.5L3.5 6L7 3.5Z" fill="#cfcfcf"/></svg>
<svg class="a" style="left:30px;top:381px;" width="10" height="11" viewBox="0 0 10 11"><path d="M5 10V2M1.8 5L5 1.5L8.2 5" fill="none" stroke="#cfcfcf" stroke-width="1.2"/></svg>
<svg class="a" style="left:30px;top:395px;" width="10" height="11" viewBox="0 0 10 11"><path d="M5 1V9M1.8 6L5 9.5L8.2 6" fill="none" stroke="#cfcfcf" stroke-width="1.2"/></svg>
<svg class="a" style="left:29.5px;top:409px;" width="11" height="11" viewBox="0 0 11 11"><path d="M1 2H9M1 5H8.5C10.5 5 10.5 8.5 8.5 8.5H6M1 8.5H3.5" fill="none" stroke="#cfcfcf" stroke-width="1"/><path d="M7 7L5.5 8.5L7 10" fill="none" stroke="#cfcfcf" stroke-width="0.9"/></svg>
<div class="a" style="left:29px;top:422.5px;width:11.5px;height:11px;background:#4e5254;border-radius:1px"></div>
<svg class="a" style="left:29.5px;top:423px;" width="11" height="11" viewBox="0 0 11 11"><path d="M1.5 2.5H6M1.5 5H6M1.5 8.5H9.5" stroke="#cfcfcf" stroke-width="1"/><path d="M8 1V6.5M6.5 5L8 6.8L9.5 5" fill="none" stroke="#cfcfcf" stroke-width="0.9"/></svg>
<svg class="a" style="left:29.5px;top:437px;" width="11" height="11" viewBox="0 0 11 11"><rect x="3" y="1" width="5" height="2.5" fill="#cfcfcf"/><rect x="1" y="4" width="9" height="4" fill="#cfcfcf"/><rect x="3" y="7" width="5" height="3" fill="#cfcfcf" stroke="#3c3f41" stroke-width="0.6"/></svg>
<svg class="a" style="left:30px;top:450px;" width="10" height="11" viewBox="0 0 10 11"><rect x="1" y="2" width="8" height="1.2" fill="#cfcfcf"/><rect x="3.5" y="0.8" width="3" height="1.2" fill="#cfcfcf"/><path d="M2 4H8L7.4 10H2.6Z" fill="#cfcfcf"/></svg>
<div class="a" style="left:42px;top:527.5px;width:583px;height:4px;background:#45474a;"></div>
<div class="a" style="left:42px;top:379px;width:971px;height:152.5px;overflow:hidden">
<div class="t m" style="left:7.15px;top:-5.70px;font-size:8.2px;line-height:10px;color:#bbbbbb;transform:scaleX(0.8659);transform-origin:0 50%;"><span style="color:#bbbbbb;"> '  |____| .__|_| |_|_| |_\__, | / / / /</span></div>
<div class="t m" style="left:7.15px;top:6.00px;font-size:8.2px;line-height:10px;color:#bbbbbb;transform:scaleX(0.8659);transform-origin:0 50%;"><span style="color:#bbbbbb;"> =========|_|==============|___/=/_/_/_/</span></div>
<div class="t m" style="left:7.15px;top:17.70px;font-size:8.2px;line-height:10px;color:#bbbbbb;transform:scaleX(0.8659);transform-origin:0 50%;"><span style="color:#5c9a35;"> :: Spring Boot :: </span><span style="color:#bbbbbb;">               (v2.4.0)</span></div>
<div class="t m" style="left:7.15px;top:41.10px;font-size:8.2px;line-height:10px;color:#bbbbbb;transform:scaleX(0.8659);transform-origin:0 50%;"><span style="color:#bbbbbb;">2023-09-28 11:43:35.518  </span><span style="color:#5c9a35;">INFO</span><span style="color:#bbbbbb;"> </span><span style="color:#a06bc6;">17924</span><span style="color:#bbbbbb;"> --- [           main] </span><span style="color:#1e9d9d;">com.wwc.ArchivesAfterApplication        </span><span style="color:#bbbbbb;"> : Starting ArchivesAfterApplication using Java 1.8.0_181 on PC-20220328XUVV with PID 17924 (</span><span style="color:#5394ec;text-decoration:underline">D:\zjh\workspace\files_after-master</span></div>
<div class="t m" style="left:7.15px;top:52.80px;font-size:8.2px;line-height:10px;color:#bbbbbb;transform:scaleX(0.8659);transform-origin:0 50%;"><span style="color:#bbbbbb;">2023-09-28 11:43:35.523  </span><span style="color:#5c9a35;">INFO</span><span style="color:#bbbbbb;"> </span><span style="color:#a06bc6;">17924</span><span style="color:#bbbbbb;"> --- [           main] </span><span style="color:#1e9d9d;">com.wwc.ArchivesAfterApplication        </span><span style="color:#bbbbbb;"> : No active profile set, falling back to default profiles: default</span></div>
<div class="t m" style="left:7.15px;top:64.50px;font-size:8.2px;line-height:10px;color:#bbbbbb;transform:scaleX(0.8659);transform-origin:0 50%;"><span style="color:#bbbbbb;">2023-09-28 11:43:36.569  </span><span style="color:#5c9a35;">INFO</span><span style="color:#bbbbbb;"> </span><span style="color:#a06bc6;">17924</span><span style="color:#bbbbbb;"> --- [           main] </span><span style="color:#1e9d9d;">o.s.b.w.embedded.tomcat.TomcatWebServer </span><span style="color:#bbbbbb;"> : Tomcat initialized with port(s): 8081 (http)</span></div>
<div class="t m" style="left:7.15px;top:76.20px;font-size:8.2px;line-height:10px;color:#bbbbbb;transform:scaleX(0.8659);transform-origin:0 50%;"><span style="color:#bbbbbb;">2023-09-28 11:43:36.577  </span><span style="color:#5c9a35;">INFO</span><span style="color:#bbbbbb;"> </span><span style="color:#a06bc6;">17924</span><span style="color:#bbbbbb;"> --- [           main] </span><span style="color:#1e9d9d;">o.apache.catalina.core.StandardService  </span><span style="color:#bbbbbb;"> : Starting service [Tomcat]</span></div>
<div class="t m" style="left:7.15px;top:87.90px;font-size:8.2px;line-height:10px;color:#bbbbbb;transform:scaleX(0.8659);transform-origin:0 50%;"><span style="color:#bbbbbb;">2023-09-28 11:43:36.577  </span><span style="color:#5c9a35;">INFO</span><span style="color:#bbbbbb;"> </span><span style="color:#a06bc6;">17924</span><span style="color:#bbbbbb;"> --- [           main] </span><span style="color:#1e9d9d;">org.apache.catalina.core.StandardEngine </span><span style="color:#bbbbbb;"> : Starting Servlet engine: [Apache Tomcat/9.0.39]</span></div>
<div class="t m" style="left:7.15px;top:99.60px;font-size:8.2px;line-height:10px;color:#bbbbbb;transform:scaleX(0.8659);transform-origin:0 50%;"><span style="color:#bbbbbb;">2023-09-28 11:43:36.672  </span><span style="color:#5c9a35;">INFO</span><span style="color:#bbbbbb;"> </span><span style="color:#a06bc6;">17924</span><span style="color:#bbbbbb;"> --- [           main] </span><span style="color:#1e9d9d;">o.a.c.c.C.[Tomcat].[localhost].[/]      </span><span style="color:#bbbbbb;"> : Initializing Spring embedded WebApplicationContext</span></div>
<div class="t m" style="left:7.15px;top:111.30px;font-size:8.2px;line-height:10px;color:#bbbbbb;transform:scaleX(0.8659);transform-origin:0 50%;"><span style="color:#bbbbbb;">2023-09-28 11:43:36.673  </span><span style="color:#5c9a35;">INFO</span><span style="color:#bbbbbb;"> </span><span style="color:#a06bc6;">17924</span><span style="color:#bbbbbb;"> --- [           main] </span><span style="color:#1e9d9d;">w.s.c.ServletWebServerApplicationContext</span><span style="color:#bbbbbb;"> : Root WebApplicationContext: initialization completed in 1095 ms</span></div>
<div class="t m" style="left:7.15px;top:123.00px;font-size:8.2px;line-height:10px;color:#bbbbbb;transform:scaleX(0.8659);transform-origin:0 50%;"><span style="color:#bbbbbb;">2023-09-28 11:43:37.123  </span><span style="color:#5c9a35;">INFO</span><span style="color:#bbbbbb;"> </span><span style="color:#a06bc6;">17924</span><span style="color:#bbbbbb;"> --- [           main] </span><span style="color:#1e9d9d;">o.s.s.concurrent.ThreadPoolTaskExecutor </span><span style="color:#bbbbbb;"> : Initializing ExecutorService 'applicationTaskExecutor'</span></div>
<div class="t m" style="left:7.15px;top:134.70px;font-size:8.2px;line-height:10px;color:#bbbbbb;transform:scaleX(0.8659);transform-origin:0 50%;"><span style="color:#bbbbbb;">2023-09-28 11:43:37.323  </span><span style="color:#5c9a35;">INFO</span><span style="color:#bbbbbb;"> </span><span style="color:#a06bc6;">17924</span><span style="color:#bbbbbb;"> --- [           main] </span><span style="color:#1e9d9d;">o.s.b.w.embedded.tomcat.TomcatWebServer </span><span style="color:#bbbbbb;"> : Tomcat started on port(s): 8081 (http) with context path ''</span></div>
<div class="t m" style="left:7.15px;top:146.40px;font-size:8.2px;line-height:10px;color:#bbbbbb;transform:scaleX(0.8659);transform-origin:0 50%;"><span style="color:#bbbbbb;">2023-09-28 11:43:37.336  </span><span style="color:#5c9a35;">INFO</span><span style="color:#bbbbbb;"> </span><span style="color:#a06bc6;">17924</span><span style="color:#bbbbbb;"> --- [           main] </span><span style="color:#1e9d9d;">com.wwc.ArchivesAfterApplication        </span><span style="color:#bbbbbb;"> : Started ArchivesAfterApplication in 2.426 seconds (JVM running for 4.31)</span></div>
</div>
<div class="a" style="left:1008px;top:408.5px;width:4px;height:56.5px;background:#4a4c4e;"></div>
<div class="a" style="left:0px;top:532px;width:1024px;height:11px;background:#3c3f41;"></div>
<div class="a" style="left:0px;top:532px;width:1024px;height:1px;background:#323435;"></div>
<div class="a" style="left:300.7px;top:533px;width:27.3px;height:10px;background:#2f3133;"></div>
<div class="t" style="left:25.40px;top:533.80px;font-size:6.2px;line-height:10px;color:#bbbbbb;">TODO</div>
<svg class="a" style="left:16.4px;top:534px;" width="8" height="8" viewBox="0 0 8 8"><path d="M0.5 1.5H7.5M0.5 3.5H7.5M0.5 5.5H7.5M0.5 7.3H7.5" stroke="#afb1b3" stroke-width="1"/></svg>
<div class="t" style="left:62.30px;top:533.80px;font-size:6.2px;line-height:10px;color:#bbbbbb;">Problems</div>
<svg class="a" style="left:52px;top:534px;" width="8" height="8" viewBox="0 0 8 8"><circle cx="4" cy="4" r="3.6" fill="#cfcfcf"/><rect x="3.4" y="1.8" width="1.2" height="3" fill="#3c3f41"/><rect x="3.4" y="5.4" width="1.2" height="1" fill="#3c3f41"/></svg>
<div class="t" style="left:108.70px;top:533.80px;font-size:6.2px;line-height:10px;color:#bbbbbb;">Terminal</div>
<svg class="a" style="left:98.5px;top:534px;" width="8" height="8" viewBox="0 0 8 8"><rect x="0.5" y="0.5" width="7" height="7" fill="#cfcfcf"/><path d="M1.8 2L3.6 3.5L1.8 5" stroke="#3c3f41" stroke-width="0.8" fill="none"/></svg>
<div class="t" style="left:152.60px;top:533.80px;font-size:6.2px;line-height:10px;color:#bbbbbb;">Profiler</div>
<svg class="a" style="left:142.4px;top:534px;" width="8" height="8" viewBox="0 0 8 8"><circle cx="3.5" cy="4" r="3" fill="none" stroke="#cfcfcf" stroke-width="0.9"/><path d="M5 4.5L8 6.2L5 8Z" fill="#cfcfcf"/></svg>
<div class="t" style="left:192.00px;top:533.80px;font-size:6.2px;line-height:10px;color:#bbbbbb;">Build</div>
<svg class="a" style="left:181.8px;top:534px;" width="8" height="8" viewBox="0 0 8 8"><path d="M0.8 2L3.5 0.8L5 2L4 3L7.5 7L6.8 7.7L3 3.8L2 4.5Z" fill="#cfcfcf"/></svg>
<div class="t" style="left:226.80px;top:533.80px;font-size:6.2px;line-height:10px;color:#bbbbbb;">Endpoints</div>
<svg class="a" style="left:215.4px;top:534px;" width="9" height="8" viewBox="0 0 9 8"><circle cx="4.5" cy="1.5" r="1.3" fill="#cfcfcf"/><circle cx="1.5" cy="6.5" r="1.3" fill="#cfcfcf"/><circle cx="7.5" cy="6.5" r="1.3" fill="#cfcfcf"/><path d="M4.5 1.5L1.5 6.5M4.5 1.5L7.5 6.5" stroke="#cfcfcf" stroke-width="0.8"/></svg>
<div class="t" style="left:275.60px;top:533.80px;font-size:6.2px;line-height:10px;color:#bbbbbb;">Spring</div>
<svg class="a" style="left:264.6px;top:534px;" width="8" height="8" viewBox="0 0 8 8"><path d="M0.5 5C0.5 2.5 3 1 7.5 1C7.5 4.5 5.5 7 2.5 7C1.5 7 0.5 6.2 0.5 5Z" fill="#afb1b3"/></svg>
<div class="t" style="left:312.50px;top:533.80px;font-size:6.2px;line-height:10px;color:#bbbbbb;">Run</div>
<svg class="a" style="left:302.3px;top:534px;" width="8" height="8" viewBox="0 0 8 8"><path d="M1 0.8L6.5 4L1 7.2Z" fill="#cfcfcf"/><circle cx="5.5" cy="6.5" r="1.2" fill="#2fc424"/></svg>
<svg class="a" style="left:971.5px;top:534px;" width="8" height="8" viewBox="0 0 8 8"><path d="M4 0.8C6 0.8 7.3 2.2 7.3 4C7.3 5.8 6 7.2 4 7.2H0.8V4C0.8 2.2 2 0.8 4 0.8Z" fill="none" stroke="#cfcfcf" stroke-width="0.8"/></svg>
<div class="t" style="left:979.90px;top:534.00px;font-size:6.2px;line-height:10px;color:#bbbbbb;">Event Log</div>
<div class="a" style="left:0px;top:543px;width:1024px;height:11px;background:#3c3f41;"></div>
<div class="a" style="left:0px;top:543px;width:1024px;height:1px;background:#323435;"></div>
<svg class="a" style="left:3px;top:545px;" width="9" height="9" viewBox="0 0 9 9"><rect x="1" y="1.5" width="6" height="6" fill="none" stroke="#afb1b3" stroke-width="0.9"/><path d="M2 8.5H8V2.5" fill="none" stroke="#afb1b3" stroke-width="0.8"/></svg>
<div class="t" style="left:14.40px;top:544.50px;font-size:6.95px;line-height:10px;color:#bbbbbb;">Build completed successfully in 6 sec, 676 ms (10 minutes ago)</div>
<div class="t" style="left:992.70px;top:544.50px;font-size:6.2px;line-height:10px;color:#bbbbbb;">7:14</div>
<svg class="a" style="left:1010px;top:545px;" width="9" height="9" viewBox="0 0 9 9"><rect x="3" y="4" width="5" height="4" fill="#cfcfcf"/><path d="M1 4V2.5A1.5 1.5 0 0 1 4 2.5V4" fill="none" stroke="#cfcfcf" stroke-width="0.9"/></svg>
<div class="a" style="left:0px;top:554.5px;width:1024px;height:5px;background:#0c0e12;"></div>
<div class="a" style="left:1021px;top:555px;width:1px;height:4px;background:#6a6a6a;"></div>
<div class="t" style="left:988.50px;top:555.70px;font-size:7.5px;line-height:10px;color:#d8d8d8;font-weight:bold;letter-spacing:-0.2px">11:24:51</div>
<svg class="a" style="left:0px;top:0px;" width="1024" height="300" viewBox="0 0 1024 300"><g fill="none" stroke-linecap="butt" stroke-linejoin="miter"><path d="M352,267.7H343.95Q341.34999999999997,267.7 341.34999999999997,270.3V275.34999999999997Q341.34999999999997,277.95 343.95,277.95H352M355.45,279.4V267.7H363.2Q365.8,267.7 365.8,270.3V279.4M449.55,266.25V275.34999999999997Q449.55,277.95 452.15000000000003,277.95H462.34999999999997Q464.95,277.95 464.95,275.34999999999997V266.25M457.25,266.25V277.95M471.55,266.25V275.34999999999997Q471.55,277.95 474.15000000000003,277.95H484.95Q487.55,277.95 487.55,275.34999999999997V266.25M479.55,266.25V277.95M493.65,266.25V275.34999999999997Q493.65,277.95 496.25,277.95H507.45Q510.05,277.95 510.05,275.34999999999997V266.25M501.85,266.25V277.95M514.5,277.84999999999997H517.9M521.5500000000001,266.25V275.34999999999997Q521.5500000000001,277.95 524.1500000000001,277.95H534.9499999999999Q537.55,277.95 537.55,275.34999999999997V266.25M529.55,266.25V277.95M554.4,267.7H545.2500000000001Q542.6500000000001,267.7 542.6500000000001,270.3V275.34999999999997Q542.6500000000001,277.95 545.2500000000001,277.95H554.4M542.6500000000001,272.8H552.9M559.0,266.25V279.4M559.0,261.7V264.8M576.25,277.95H567.6500000000001Q565.0500000000001,277.95 565.0500000000001,275.34999999999997V270.3Q565.0500000000001,267.7 567.6500000000001,267.7H576.25V280.4Q576.25,283.0 573.65,283.0H565.1M581.75,266.25V275.34999999999997Q581.75,277.95 584.35,277.95H591.55M591.55,266.25V279.4M597.6,267.7H605.7499999999999Q608.3499999999999,267.7 608.3499999999999,270.3V279.4M608.3499999999999,272.8H600.0500000000001Q598.0500000000001,272.8 598.0500000000001,274.8V276.45Q598.0500000000001,277.95 600.0500000000001,277.95H608.3499999999999M614.1500000000001,279.4V267.7H623.2499999999999Q625.8499999999999,267.7 625.8499999999999,270.3V279.4M630.75,261.4V279.4M640,266.25L631.75,273.1L640.7,279.4M654.2,267.7H647.0500000000001Q644.45,267.7 644.45,270.3V275.34999999999997Q644.45,277.95 647.0500000000001,277.95H654.2M644.45,272.8H652.7M656.6,277.84999999999997H660.5M674.2,267.7H666.5500000000001Q663.95,267.7 663.95,270.3V275.34999999999997Q663.95,277.95 666.5500000000001,277.95H674.2M677.6500000000001,279.4V267.7H685.3499999999999Q687.9499999999999,267.7 687.9499999999999,270.3V279.4" stroke="#141414" stroke-width="2.9" transform="translate(0.7,0.7)" opacity="0.8"/><path d="M370.3,261.5H391.9V278.3H370.3ZM375,264.8H386M374.2,268.8H387M375,272.6H386.5V276.2L384.5,276.2M380.5,263V277.5M395,262.6H404.2L397,279M397.2,266.5L405,279M406.6,272V261.6H416.4V272M411.4,264.5V276Q411.4,278.3 413.7,278.3H418.3M407.5,271.5Q407,277 402.5,279M432.8,258.6V261.8M422.7,268V263.6H443.3V268M430.2,265L426.8,268.4M429,266.8H437.8L427.5,272.4M431.5,269L443.5,272.2M426.4,274H440.2V278.4H426.4Z" stroke="#141414" stroke-width="2.2" transform="translate(0.7,0.7)" opacity="0.8"/><path d="M352,267.7H343.95Q341.34999999999997,267.7 341.34999999999997,270.3V275.34999999999997Q341.34999999999997,277.95 343.95,277.95H352M355.45,279.4V267.7H363.2Q365.8,267.7 365.8,270.3V279.4M449.55,266.25V275.34999999999997Q449.55,277.95 452.15000000000003,277.95H462.34999999999997Q464.95,277.95 464.95,275.34999999999997V266.25M457.25,266.25V277.95M471.55,266.25V275.34999999999997Q471.55,277.95 474.15000000000003,277.95H484.95Q487.55,277.95 487.55,275.34999999999997V266.25M479.55,266.25V277.95M493.65,266.25V275.34999999999997Q493.65,277.95 496.25,277.95H507.45Q510.05,277.95 510.05,275.34999999999997V266.25M501.85,266.25V277.95M514.5,277.84999999999997H517.9M521.5500000000001,266.25V275.34999999999997Q521.5500000000001,277.95 524.1500000000001,277.95H534.9499999999999Q537.55,277.95 537.55,275.34999999999997V266.25M529.55,266.25V277.95M554.4,267.7H545.2500000000001Q542.6500000000001,267.7 542.6500000000001,270.3V275.34999999999997Q542.6500000000001,277.95 545.2500000000001,277.95H554.4M542.6500000000001,272.8H552.9M559.0,266.25V279.4M559.0,261.7V264.8M576.25,277.95H567.6500000000001Q565.0500000000001,277.95 565.0500000000001,275.34999999999997V270.3Q565.0500000000001,267.7 567.6500000000001,267.7H576.25V280.4Q576.25,283.0 573.65,283.0H565.1M581.75,266.25V275.34999999999997Q581.75,277.95 584.35,277.95H591.55M591.55,266.25V279.4M597.6,267.7H605.7499999999999Q608.3499999999999,267.7 608.3499999999999,270.3V279.4M608.3499999999999,272.8H600.0500000000001Q598.0500000000001,272.8 598.0500000000001,274.8V276.45Q598.0500000000001,277.95 600.0500000000001,277.95H608.3499999999999M614.1500000000001,279.4V267.7H623.2499999999999Q625.8499999999999,267.7 625.8499999999999,270.3V279.4M630.75,261.4V279.4M640,266.25L631.75,273.1L640.7,279.4M654.2,267.7H647.0500000000001Q644.45,267.7 644.45,270.3V275.34999999999997Q644.45,277.95 647.0500000000001,277.95H654.2M644.45,272.8H652.7M656.6,277.84999999999997H660.5M674.2,267.7H666.5500000000001Q663.95,267.7 663.95,270.3V275.34999999999997Q663.95,277.95 666.5500000000001,277.95H674.2M677.6500000000001,279.4V267.7H685.3499999999999Q687.9499999999999,267.7 687.9499999999999,270.3V279.4" stroke="#b9b9b9" stroke-width="2.9"/><path d="M370.3,261.5H391.9V278.3H370.3ZM375,264.8H386M374.2,268.8H387M375,272.6H386.5V276.2L384.5,276.2M380.5,263V277.5M395,262.6H404.2L397,279M397.2,266.5L405,279M406.6,272V261.6H416.4V272M411.4,264.5V276Q411.4,278.3 413.7,278.3H418.3M407.5,271.5Q407,277 402.5,279M432.8,258.6V261.8M422.7,268V263.6H443.3V268M430.2,265L426.8,268.4M429,266.8H437.8L427.5,272.4M431.5,269L443.5,272.2M426.4,274H440.2V278.4H426.4Z" stroke="#b9b9b9" stroke-width="2.2"/></g></svg>
<svg class="a" style="left:971px;top:124px;" width="37" height="52" viewBox="0 0 37 52"><defs><clipPath id="lg"><rect x="1.7" y="1" width="33.3" height="50" rx="8.5" ry="8.5"/></clipPath><pattern id="dots" width="3" height="3" patternUnits="userSpaceOnUse"><rect width="3" height="3" fill="#9fc3a6"/><rect x="0" y="0" width="1.2" height="1.2" fill="#eef0d2"/><rect x="1.6" y="1.5" width="1.2" height="1.2" fill="#dfe8c2"/></pattern></defs><g clip-path="url(#lg)"><rect width="37" height="52" fill="#4f9d8b"/><circle cx="25" cy="12" r="10" fill="url(#dots)" opacity="0.95"/><circle cx="8" cy="43" r="13" fill="url(#dots)" opacity="0.7"/><circle cx="27" cy="28" r="7" fill="#5aa593" opacity="0.7"/></g><path d="M8.7 18.5L11 17H13.1L15.4 18.5L14.6 20.3H13.6V23.5H10.5V20.3H9.5Z" fill="#ffffff"/><circle cx="7.5" cy="10" r="0.5" fill="#fff"/><circle cx="8.3" cy="12.2" r="0.5" fill="#fff"/><g fill="none" stroke="#ffffff" stroke-width="0.95"><path transform="translate(14.3,25.7)" d="M2,0.8L2.8,2.2M6.6,0.8L5.8,2.2M1.2,3.4H7.4M0,5.7H8.6M4.3,0V8.6"/><path transform="translate(21.3,35.4)" d="M0.5,1.4H9.2M3,0V2.8M6.7,0V2.8M1.8,3.8H7.9V6M1.8,3.8V6M0,6H9.7M4.85,3V6M4.85,6L0.8,9.1M4.85,6L9,9.1"/></g></svg>
<svg class="a" style="left:868px;top:502px;" width="120" height="28" viewBox="0 0 120 28"><g fill="none" stroke="#8c8c8c" stroke-width="0.85"><path d="M2.5 3L3.8 4.2M2 6L3.3 7.2M2 12.5L3.8 9M4.8 3.2H8.6M4.8 5.2H8.6V8.4H4.8ZM6.7 8.4V12.8M5.2 12.8L4.6 11M9.2 2.5L11 2.5M9.6 4.5H12L10 12.8M10.2 6.8L12 12.8"/><path d="M13.5 3L14.8 4.2M13 6L14.3 7.2M13 12.5L14.8 9M16.2 4L22.2 2.8M15.6 6.4H22.8M19.2 3.2V8.6M16.6 9H21.8V12.8H16.6Z"/></g><text x="27" y="12.6" font-size="11" fill="#8c8c8c" font-family="Liberation Sans">Windows</text><g fill="none" stroke="#7d7d7d" stroke-width="0.6" transform="translate(1.5,0) scale(0.88,1)"><path d="M2 16.5H5.5M3.3 15.2V23.8M2 19.8H5.5M6.3 16.2H9.6M6.6 18.5H9.6M8 16.2V23.8M6.3 21.5L9.6 22"/><path d="M11 16H15.8M12.3 16L11.5 19H14.8M13.2 19V23M11 23H15.8M17 16V22M18.6 15.2V23.8"/><path d="M20.6 15.5L21.4 16.5M24 15.4H22.8"/><path d="M27 15.8L27.8 16.6M26.6 18.2L27.4 21M29.4 15.4H32V23.8M28.6 21H33M34 16H38.6M34.4 18.4H38.2V21H34.4ZM36.3 21V23.8"/><path d="M40 16H44.8M40.4 17.6H44.4V23.8H40.4ZM40.4 19.6H44.4M40.4 21.6H44.4"/><path d="M46 15.4L47.6 15.4"/><path d="M49 16V22.8L51.2 21M51.6 16L52.4 17.8M54.4 15.6L52.6 23.8M53.4 19.8L55.2 23.8"/><path d="M56.6 15.6L57.4 16.5M56.2 18.2L57 21M59.6 16H62.2M58.8 17.6H63V20H58.8ZM60.9 20V23.8M62.8 15.6H64.2M63.2 17H65L63.6 23.8"/><path d="M66.4 15.6L67.2 16.5M66 18.2L66.8 21M68.6 16.6L73 15.6M68.2 18.6H73.6M70.9 16V20M69.2 20.5H72.8V23.8H69.2Z"/></g><text x="67" y="24.2" font-size="8.3" fill="#7d7d7d" font-family="Liberation Sans">Windows</text><circle cx="101.5" cy="23.4" r="0.8" fill="none" stroke="#7d7d7d" stroke-width="0.5"/></svg>
</body></html>
